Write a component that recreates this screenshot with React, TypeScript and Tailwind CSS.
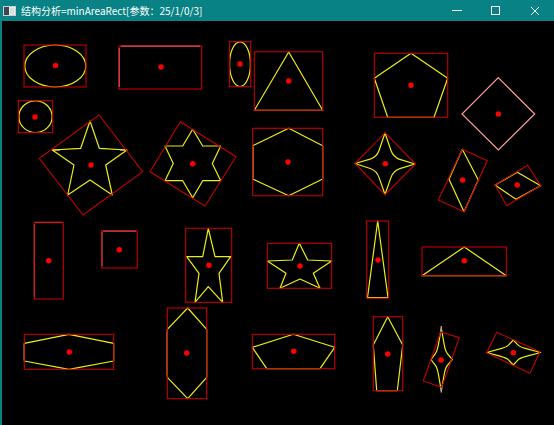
type Pt = [number, number];

const YELLOW = '#eeee10';
const RED = '#c40000';
const PINK = '#ffb0b0';

const pts = (p: Pt[]) => p.map(([x, y]) => `${x},${y}`).join(' ');

// axis aligned bounding rects (x1, y1, x2, y2)
const boxes: [number, number, number, number][] = [
  [24, 45, 86, 87],
  [119, 46, 201.7, 89],
  [229.5, 41.7, 250.7, 86.7],
  [18.3, 100.7, 52.7, 132.7],
  [254.3, 51.7, 322.7, 110.3],
  [374.3, 53.3, 447.7, 117.3],
  [252.7, 128.3, 322.7, 195.7],
  [34.3, 222.3, 63.3, 299],
  [101.7, 230.7, 137.3, 268],
  [185.7, 228.3, 231.7, 302.3],
  [267.3, 243.3, 331.7, 288.3],
  [366.7, 221, 388.7, 298.3],
  [422, 247, 506.3, 275.7],
  [24.3, 334.3, 113.7, 369.3],
  [167.3, 308, 206.7, 398.7],
  [252.3, 334.3, 334.7, 368.7],
  [373.3, 316.7, 402.7, 390.7],
];

// rotated min area rects
const rotated: Pt[][] = [
  [[99, 115], [142.7, 171.7], [83, 215], [39.3, 158.3]],
  [[180.3, 121.7], [236, 156.7], [205, 206], [150, 171.7]],
  [[385, 132.7], [415.5, 164], [385, 194.7], [355, 163.5]],
  [[462.3, 149.3], [487.3, 160.7], [464, 211.7], [438.3, 200]],
  [[527.7, 165.3], [540.7, 185.7], [506.7, 205.7], [495, 185]],
  [[440.7, 332], [459.3, 337.7], [441.7, 387.3], [423.3, 381]],
  [[496.7, 332.3], [540, 351.7], [530, 373.3], [486.7, 352.7]],
];

const contours: Pt[][] = [
  // star 5 tilted
  [[90, 121], [99.3, 148.3], [127, 150], [105.7, 165], [112.3, 195], [90, 180], [67.7, 195], [74, 165], [52.3, 150], [80.7, 148.3]],
  // star 6
  [[192.7, 129.3], [202.7, 146], [220.7, 146], [212.3, 163.5], [220.7, 180.7], [202.7, 180.7], [192.7, 197.7], [182.7, 180.7], [165, 180.7], [173.3, 163.5], [165, 146], [182.7, 146]],
  // triangle
  [[288.7, 52], [322.7, 110.3], [254.3, 110.3]],
  // pentagon
  [[411, 53.3], [447.7, 78.3], [434, 117.3], [387.7, 117.3], [374.3, 78.3]],
  // hexagon
  [[288.7, 128.3], [322.7, 145.7], [322.7, 179], [288.7, 195.7], [252.7, 179], [252.7, 145.7]],
  // parallelograms
  [[462.3, 149.3], [478.3, 180], [464, 211.7], [449, 179.3]],
  [[517.3, 172.3], [540.7, 185.7], [516, 199.3], [495, 185]],
  // upright star
  [[208.3, 228.3], [215, 256.7], [230.7, 256.7], [219, 273.3], [222.7, 302.3], [208.3, 286.7], [195, 302.3], [199, 273.3], [186.7, 256.7], [202.7, 256.7]],
  // wide star
  [[299.3, 243.3], [307.7, 260], [331.7, 261], [313.3, 273.3], [320, 288.3], [300, 279], [280, 288.3], [286, 273.3], [267.3, 261], [292.3, 260]],
  // thin triangle
  [[377.7, 221], [388, 297.5], [367.5, 297.5]],
  // wide triangle
  [[464.3, 247], [506.3, 275.7], [422, 275.7]],
  // lens hexagons
  [[69, 334.3], [113.7, 343.3], [113.7, 361], [69, 369.3], [24.3, 361], [24.3, 343.3]],
  [[187.7, 308], [206.7, 329.3], [206.7, 377.3], [187.7, 398.7], [167.3, 377.3], [167.3, 329.3]],
  // pentagons
  [[293.3, 334.3], [334.7, 347.3], [320, 368.7], [266.7, 368.7], [252.3, 347.3]],
  [[387.7, 316.7], [402.7, 345], [397.3, 390.7], [376.7, 390.7], [373.3, 345]],
];

// four point stars: center, waist offset and tips (top, right, bottom, left)
const sparkles: { c: Pt; w: Pt; tips: Pt[] }[] = [
  { c: [385, 164], w: [8.3, 6.7], tips: [[385, 133], [415, 164], [385, 194.5], [355, 163.5]] },
  { c: [441.3, 359.5], w: [4, 8.5], tips: [[441.3, 328], [452.3, 359.5], [441.3, 391], [431, 359.5]] },
  { c: [513.3, 352.5], w: [6.5, 5.5], tips: [[513.3, 340], [540.7, 352.5], [513.3, 365], [486.7, 352.5]] },
];

const sparklePath = ({ c, w, tips }: { c: Pt; w: Pt; tips: Pt[] }) => {
  const waists: Pt[] = [
    [c[0] + w[0], c[1] - w[1]],
    [c[0] + w[0], c[1] + w[1]],
    [c[0] - w[0], c[1] + w[1]],
    [c[0] - w[0], c[1] - w[1]],
  ];
  const toward = (m: Pt, p: Pt, t: number): Pt => [m[0] + t * (p[0] - m[0]), m[1] + t * (p[1] - m[1])];
  let d = `M${tips[0][0]} ${tips[0][1]}`;
  for (let i = 0; i < 4; i++) {
    const a = tips[i];
    const b = tips[(i + 1) % 4];
    const m = waists[i];
    const p1 = toward(m, a, 0.3);
    const p2 = toward(m, b, 0.3);
    d += ` L${p1[0]} ${p1[1]} Q${m[0]} ${m[1]} ${p2[0]} ${p2[1]} L${b[0]} ${b[1]}`;
  }
  return d + 'Z';
};

const dots: Pt[] = [
  [55.5, 65.5], [161, 67], [240, 64], [35, 117], [91, 165], [192.7, 163.7],
  [288.7, 81], [411, 85.3], [498.3, 114], [288, 162], [385.3, 163.7], [462.7, 180],
  [517.3, 185], [48.7, 260.7], [119.3, 249.7], [209, 265.3], [300, 266], [378, 260],
  [464.3, 260.7], [69.3, 352], [186.7, 353], [293.7, 351.3], [387.7, 354], [441, 360],
  [513.3, 352.7],
];

// light segments where the contour shows beside the red box
const highlights: [number, number, number, number][] = [
  [120.7, 46.2, 200, 46.2],
  [119.2, 48, 119.2, 87],
  [35, 222.5, 62, 222.5],
  [34.4, 224, 34.4, 297],
  [103, 230.9, 136, 230.9],
  [101.8, 232, 101.8, 266],
  [252.8, 147, 252.8, 178],
  [24.4, 344, 24.4, 360],
  [167.4, 332, 167.4, 375],
  [52.5, 150, 60, 150],
  [120, 150, 127, 150],
];

const greyTips: [number, number, number, number][] = [
  [441.3, 326, 441.3, 332],
  [441.3, 387, 441.3, 392.5],
];

function Canvas() {
  return (
    <svg viewBox="2 21 552 404" className="block w-full h-full bg-black">
      {highlights.map(([x1, y1, x2, y2], i) => (
        <line key={`h${i}`} x1={x1} y1={y1} x2={x2} y2={y2} stroke={PINK} strokeWidth={1.2} />
      ))}
      <ellipse cx={55.3} cy={66} rx={30.5} ry={21} fill="none" stroke={YELLOW} strokeWidth={1.2} />
      <ellipse cx={240} cy={64.2} rx={10.4} ry={22.4} fill="none" stroke={YELLOW} strokeWidth={1.2} />
      <ellipse cx={35.5} cy={116.7} rx={16.6} ry={15.8} fill="none" stroke={YELLOW} strokeWidth={1.2} />
      {contours.map((c, i) => (
        <polygon key={`c${i}`} points={pts(c)} fill="none" stroke={YELLOW} strokeWidth={1.2} strokeLinejoin="round" />
      ))}
      {sparkles.map((s, i) => (
        <path key={`s${i}`} d={sparklePath(s)} fill="none" stroke={YELLOW} strokeWidth={1.2} strokeLinejoin="round" />
      ))}
      {greyTips.map(([x1, y1, x2, y2], i) => (
        <line key={`g${i}`} x1={x1} y1={y1} x2={x2} y2={y2} stroke="#a8a8a8" strokeWidth={1.4} />
      ))}
      <polygon points={pts([[498.3, 77.7], [534.7, 114], [498.3, 150], [462, 114]])} fill="none" stroke="#ff9c9c" strokeWidth={1.2} />
      {boxes.map(([x1, y1, x2, y2], i) => (
        <rect key={`b${i}`} x={x1} y={y1} width={x2 - x1} height={y2 - y1} fill="none" stroke={RED} strokeWidth={1.1} />
      ))}
      {rotated.map((r, i) => (
        <polygon key={`r${i}`} points={pts(r)} fill="none" stroke={RED} strokeWidth={1.1} />
      ))}
      {dots.map(([x, y], i) => (
        <circle key={`d${i}`} cx={x} cy={y} r={2.7} fill="#ff0000" />
      ))}
    </svg>
  );
}

export default function App() {
  return (
    <div className="w-[554px] h-[425px] flex flex-col bg-[#088284] overflow-hidden">
      <div className="h-[21px] flex items-center text-white shrink-0">
        <svg width="13" height="10" viewBox="0 0 13 10" className="ml-[3px]">
          <rect x="0.5" y="0.5" width="12" height="9" fill="#e8ecef" stroke="#c8d0d6" />
          <rect x="1" y="1" width="5" height="8" fill="#3c4650" />
          <rect x="7" y="2" width="4" height="6" fill="#cfe3d9" />
        </svg>
        <span className="ml-[5px] text-[10px] leading-none" style={{ fontFamily: '"Noto Sans CJK SC", "Noto Sans", sans-serif' }}>
          结构分析=minAreaRect[参数：25/1/0/3]
        </span>
        <div className="flex-1" />
        <div className="w-[39px] h-full flex items-center justify-center">
          <div className="w-[10px] h-px bg-white" />
        </div>
        <div className="w-[39px] h-full flex items-center justify-center">
          <div className="w-[9px] h-[9px] border border-white" />
        </div>
        <div className="w-[39px] h-full flex items-center justify-center">
          <svg width="10" height="10" viewBox="0 0 10 10">
            <path d="M1 1L9 9M9 1L1 9" stroke="white" strokeWidth="1" />
          </svg>
        </div>
      </div>
      <div className="flex-1 pl-[2px]">
        <Canvas />
      </div>
    </div>
  );
}
